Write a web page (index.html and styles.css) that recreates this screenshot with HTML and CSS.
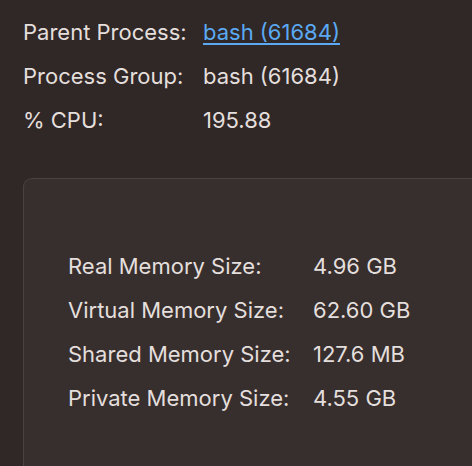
FILE: index.html
```html
<!DOCTYPE html>
<html>
<head>
<meta charset="utf-8">
<link rel="stylesheet" href="styles.css">
</head>
<body>
<div class="page">
  <div class="info">
    <div class="row"><span class="label">Parent Process:</span><a class="value link" href="#">bash (61684)</a></div>
    <div class="row"><span class="label">Process Group:</span><span class="value">bash (61684)</span></div>
    <div class="row"><span class="label">% CPU:</span><span class="value">195.88</span></div>
  </div>
  <div class="panel">
    <div class="row mem"><span class="label">Real Memory Size:</span><span class="value">4.96 GB</span></div>
    <div class="row mem"><span class="label">Virtual Memory Size:</span><span class="value">62.60 GB</span></div>
    <div class="row mem"><span class="label">Shared Memory Size:</span><span class="value">127.6 MB</span></div>
    <div class="row mem"><span class="label">Private Memory Size:</span><span class="value">4.55 GB</span></div>
  </div>
</div>
</body>
</html>
```
FILE: styles.css
```css
html, body {
  margin: 0;
  padding: 0;
  background: #302826;
  height: 100%;
  overflow: hidden;
}
.page {
  padding: 10px 0 0 23px;
  font-family: Inter, "Liberation Sans", sans-serif;
  font-size: 22px;
  color: #e4dfdd;
}
.row {
  display: flex;
  height: 44px;
  line-height: 44px;
  white-space: nowrap;
}
.info .label {
  width: 180px;
  flex: none;
}
.link {
  color: #5aa9f2;
  text-decoration: underline;
  text-underline-offset: 3px;
  text-decoration-thickness: 2px;
}
.panel {
  box-sizing: border-box;
  margin-top: 36px;
  background: #372f2d;
  border: 1px solid #4a4240;
  border-right: none;
  border-bottom: none;
  border-top-left-radius: 9px;
  padding: 65px 0 0 44px;
  height: 288px;
}
.mem .label {
  width: 245px;
  flex: none;
}
```
